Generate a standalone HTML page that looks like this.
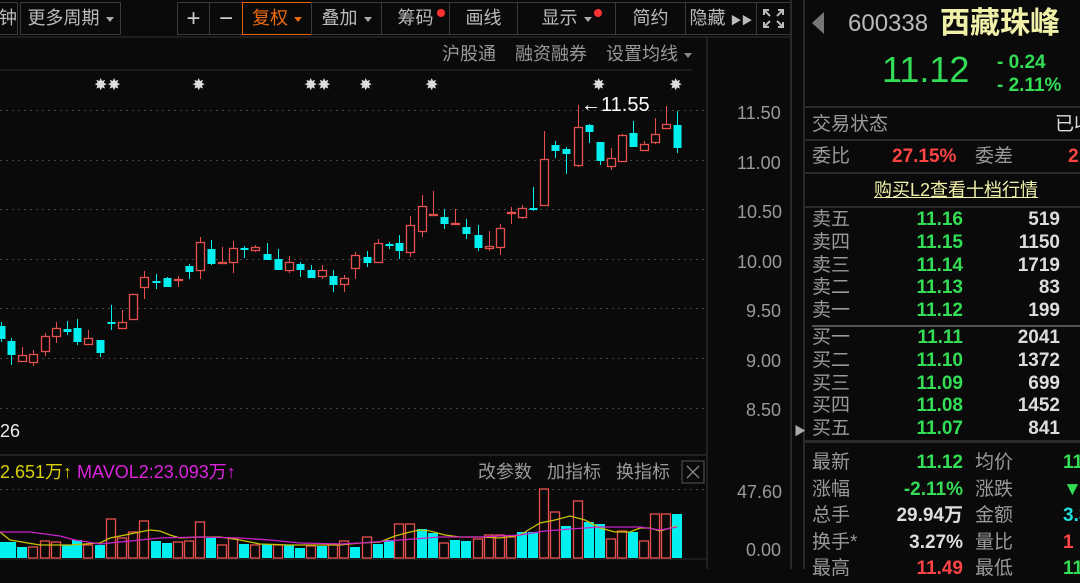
<!DOCTYPE html>
<html><head><meta charset="utf-8"><style>
*{margin:0;padding:0;box-sizing:border-box}
body{width:1080px;height:569px;background:#0a0a0a;overflow:hidden;position:relative;font-family:"Liberation Sans","Noto Sans CJK SC",sans-serif;color:#aaa;line-height:1.2}
.a{position:absolute;white-space:nowrap;line-height:22px}
.btn{position:absolute;top:2px;height:33px;border:1px solid #3a3a3a;color:#bbb;font-size:18px;line-height:31px;text-align:center}
.tri{display:inline-block;width:0;height:0;border-left:4px solid transparent;border-right:4px solid transparent;border-top:5px solid #aaa;vertical-align:middle;margin-left:6px}
.dot{position:absolute;width:8px;height:8px;border-radius:50%;background:#f33;top:6px}
.g{color:#33dd55;font-weight:bold}
.lb{color:#999;font-size:19px}
.hl{position:absolute;left:805px;width:275px;height:2px;background:#2a2a2a}
</style></head><body>
<div class="btn" style="left:-2px;width:20px;">钟</div>
<div class="btn" style="left:20px;width:101px;">更多周期<span class="tri"></span></div>
<div class="btn" style="left:177px;width:33px;font-size:24px;color:#ccc">+</div>
<div class="btn" style="left:209px;width:34px;font-size:24px;color:#ccc">−</div>
<div class="btn" style="left:242px;width:70px;border-color:#e8600a;color:#ee6a10">复权<span class="tri" style="border-top-color:#ee6a10"></span></div>
<div class="btn" style="left:311px;width:71px;">叠加<span class="tri"></span></div>
<div class="btn" style="left:381px;width:69px;">筹码<div class="dot" style="left:55px"></div></div>
<div class="btn" style="left:449px;width:69px;">画线</div>
<div class="btn" style="left:517px;width:99px;">显示<span class="tri"></span><div class="dot" style="left:76px"></div></div>
<div class="btn" style="left:615px;width:71px;">简约</div>
<div class="btn" style="left:685px;width:72px;">隐藏 <span style="font-size:11px">▶▶</span></div>
<div class="btn" style="left:756px;width:35px;">
<svg width="33" height="31" viewBox="0 0 33 31"><g stroke="#bbb" stroke-width="2" fill="none"><path d="M7 12V7h5M7 7l6 6M21 7h5v5M26 7l-6 6M7 19v5h5M7 24l6-6M26 19v5h-5M26 24l-6-6"/></g></svg></div>
<div class="a" style="left:0;top:36px;width:790px;height:2px;background:#1e1e1e"></div>
<div class="a" style="left:442px;top:43px;font-size:18px;color:#999;word-spacing:14px">沪股通 融资融券 设置均线<span class="tri" style="border-top-color:#888"></span></div>
<div class="a" style="left:0;top:69px;width:692px;height:2px;background:#1e1e1e"></div>
<div class="a" style="left:706px;top:36px;width:2px;height:533px;background:#222"></div>
<div class="a" style="left:790px;top:0;width:2px;height:569px;background:#2a2a2a"></div>
<div class="a" style="left:803px;top:0;width:2px;height:569px;background:#2a2a2a"></div>
<div class="a" style="left:794px;top:420px;width:8px;height:26px;color:#aaa;font-size:12px">▶</div>
<div class="a" style="left:0;top:454px;width:706px;height:2px;background:#222"></div>
<div class="a" style="left:0;top:558px;width:706px;height:2px;background:#1c1c1c"></div>
<svg class="a" style="left:0;top:0;line-height:normal" width="790" height="569">
<g stroke="#444" stroke-dasharray="2,4" stroke-width="1">
<line x1="0" y1="110.5" x2="706" y2="110.5"/><line x1="0" y1="160.5" x2="706" y2="160.5"/><line x1="0" y1="209.5" x2="706" y2="209.5"/><line x1="0" y1="259.5" x2="706" y2="259.5"/><line x1="0" y1="308.5" x2="706" y2="308.5"/><line x1="0" y1="358.5" x2="706" y2="358.5"/><line x1="0" y1="408.5" x2="706" y2="408.5"/><line x1="0" y1="489.5" x2="706" y2="489.5"/>
</g>
<g fill="#ddd" font-size="16" font-family="Liberation Sans">
<text x="94" y="90">✸✸</text><text x="192" y="90">✸</text><text x="304" y="90">✸✸</text><text x="359" y="90">✸</text><text x="425" y="90">✸</text><text x="592" y="90">✸</text><text x="669" y="90">✸</text>
</g>
<g id="cd"></g><g id="vol"></g>
<polyline fill="none" stroke="#c8c000" stroke-width="1.3" points="0,532 10,540 40,545 70,545 100,543 110,538 140,532 150,530 160,531 170,535 180,538 200,537 220,537 240,540 260,544 290,545 320,545 340,545 360,543 380,542 395,536 410,532 420,530 430,531 445,535 460,537 480,537 500,538 520,535 540,523 555,520 570,516 585,520 600,528 615,532 630,532 640,528 650,528 660,531 677,526"/>
<polyline fill="none" stroke="#cc22cc" stroke-width="1.3" points="0,532 30,532 60,536 75,540 100,544 130,541 160,538 200,537 240,538 270,540 300,543 340,544 360,543 400,540 440,537 480,537 520,535 545,531 570,529 600,527 640,527 660,530 677,527"/>
<text x="581" y="111" fill="#fff" font-size="20" font-family="Liberation Sans">←11.55</text>
<text x="0" y="437" fill="#eee" font-size="18" font-family="Liberation Sans">26</text>
<g fill="#999" font-size="18" font-family="Liberation Sans">
<text x="737" y="119">11.50</text><text x="737" y="169">11.00</text><text x="737" y="218">10.50</text><text x="737" y="268">10.00</text><text x="746" y="317">9.50</text><text x="746" y="367">9.00</text><text x="746" y="416">8.50</text><text x="737" y="498">47.60</text><text x="746" y="556">0.00</text>
</g>
<rect x="682" y="461" width="22" height="22" fill="none" stroke="#555"/>
<path d="M687 466l12 12M699 466l-12 12" stroke="#888" stroke-width="1.3"/>
</svg>
<div class="a" style="left:0;top:461px;font-size:18px;color:#d8d000">2.651万↑ <span style="color:#dd22dd">MAVOL2:23.093万↑</span></div>
<div class="a" style="left:478px;top:461px;font-size:18px;color:#999;word-spacing:10px">改参数 加指标 换指标</div>
<div class="a" style="left:812px;top:12px;width:0;height:0;border-top:11px solid transparent;border-bottom:11px solid transparent;border-right:12px solid #777"></div>
<div class="a" style="left:848px;top:10px;font-size:24px;color:#bbb;line-height:28px">600338</div>
<div class="a" style="left:940px;top:6px;font-size:30px;color:#f0f0a8;font-weight:bold;line-height:36px">西藏珠峰</div>
<div class="a" style="left:882px;top:50px;font-size:36px;color:#33dd55;line-height:40px">11.12</div>
<div class="a" style="left:997px;top:51px;font-size:19px;line-height:23px;color:#33dd55;font-weight:bold">- 0.24<br>- 2.11%</div>
<div class="hl" style="top:106px"></div>
<div class="a lb" style="left:812px;top:114px">交易状态</div><div class="a" style="left:1055px;top:114px;font-size:19px;color:#ddd">已收</div>
<div class="hl" style="top:139px"></div>
<div class="a lb" style="left:812px;top:146px">委比</div><div class="a" style="left:892px;top:146px;font-size:19px;color:#f44;font-weight:bold">27.15%</div><div class="a lb" style="left:975px;top:146px">委差</div><div class="a" style="left:1068px;top:146px;font-size:19px;color:#f44;font-weight:bold">2</div>
<div class="hl" style="top:172px"></div>
<div class="a" style="left:874px;top:179px;font-size:18px;color:#f0f0a8;text-decoration:underline">购买L2查看十档行情</div>
<div class="hl" style="top:206px"></div>
<div id="ob"></div>
<div class="a" style="left:812px;top:325px;width:268px;height:2px;background:#555"></div>
<div class="hl" style="top:440px;height:3px"></div>
<div class="a" style="left:812px;top:450px;font-size:19px;line-height:26.5px;color:#999">最新<br>涨幅<br>总手<br>换手*<br>最高</div>
<div class="a g" style="left:880px;top:450px;width:83px;text-align:right;font-size:19px;line-height:26.5px"><span>11.12</span><br>-2.11%<br><span style="color:#ddd">29.94万</span><br><span style="color:#ddd">3.27%</span><br><span style="color:#f44">11.49</span></div>
<div class="a" style="left:975px;top:450px;font-size:19px;line-height:26.5px;color:#999">均价<br>涨跌<br>金额<br>量比<br>最低</div>
<div class="a" style="left:1063px;top:450px;font-size:19px;line-height:26.5px;font-weight:bold;color:#33dd55">11<br>▼0<br><span style="color:#2dd">3.3</span><br><span style="color:#f44">1</span><br>11</div>
<script>
var ob=[["卖五","11.16","519"],["卖四","11.15","1150"],["卖三","11.14","1719"],["卖二","11.13","83"],["卖一","11.12","199"],["买一","11.11","2041"],["买二","11.10","1372"],["买三","11.09","699"],["买四","11.08","1452"],["买五","11.07","841"]];
var h="";ob.forEach(function(r,i){var y=209+i*22.8+(i>4?4:0);h+='<div class="a lb" style="left:812px;top:'+y+'px">'+r[0]+'</div><div class="a g" style="left:880px;top:'+y+'px;width:83px;text-align:right;font-size:19px">'+r[1]+'</div><div class="a" style="left:1000px;top:'+y+'px;width:60px;text-align:right;font-size:19px;color:#ddd;font-weight:bold">'+r[2]+'</div>';});
document.getElementById("ob").innerHTML=h;
var C=[[1,'c',326,338,322,342],[11,'c',341,354,338,365],[22,'r',355,361,347,361],[33,'r',354,362,350,366],[45,'r',336,351,333,356],[56,'r',328,336,322,343],[67,'c',329,331,321,335],[77,'c',328,341,319,345],[88,'r',338,344,330,345],[100,'c',340,352,340,357],[111,'c',322,323,305,330],[122,'r',322,328,310,328],[133,'r',294,319,294,319],[144,'r',277,287,271,299],[156,'c',281,282,274,289],[167,'c',278,286,277,287],[178,'r',279,280,276,287],[189,'c',266,271,264,279],[200,'r',242,270,237,279],[211,'c',249,263,240,265],[222,'r',262,263,247,263],[233,'r',248,262,241,273],[244,'c',248,249,246,258],[255,'r',247,250,245,252],[267,'c',254,259,243,259],[278,'c',259,269,249,269],[289,'r',262,270,256,273],[300,'c',264,269,262,277],[311,'c',270,277,265,277],[322,'r',270,276,265,279],[333,'c',276,284,270,292],[344,'r',278,284,275,292],[355,'r',255,268,252,279],[367,'c',257,262,251,267],[378,'r',243,262,239,262],[389,'c',244,245,242,249],[399,'c',243,250,235,259],[410,'r',225,252,216,257],[422,'r',206,231,195,237],[433,'r',214,215,191,215],[444,'c',217,223,209,229],[455,'r',223,224,209,224],[466,'c',227,233,219,239],[478,'c',235,247,225,251],[489,'r',246,248,231,251],[500,'r',228,247,224,255],[511,'r',212,213,207,224],[522,'r',208,217,205,219],[533,'c',208,209,187,211],[544,'r',159,205,131,205],[555,'c',145,150,141,158],[566,'c',149,153,147,174],[578,'r',127,165,105,167],[589,'c',125,131,124,143],[600,'c',142,160,142,165],[611,'r',158,166,148,170],[622,'r',135,161,134,162],[633,'c',133,146,121,147],[644,'r',144,150,141,150],[655,'r',134,142,118,144],[666,'r',124,128,106,128],[677,'c',125,147,111,153]];
var R="#e8504f",Cy="#00f0f0",s="";
C.forEach(function(c){var x=c[0],col=c[1]=='r'?R:Cy;s+='<line x1="'+(x+.5)+'" y1="'+c[4]+'" x2="'+(x+.5)+'" y2="'+c[5]+'" stroke="'+col+'"/>';
var hh=Math.max(c[3]-c[2],1);if(c[1]=='r')s+='<rect x="'+(x-3.5)+'" y="'+(c[2]+.5)+'" width="8" height="'+hh+'" fill="#0a0a0a" stroke="'+col+'" stroke-width="1.3"/>';else s+='<rect x="'+(x-3.5)+'" y="'+c[2]+'" width="8" height="'+(hh+1)+'" fill="'+col+'"/>';});
document.getElementById("cd").innerHTML=s;
var VT=[542,542,547,547,541,542,545,540,545,545,519,538,532,521,541,543,542,541,522,538,545,538,544,545,544,545,545,548,546,546,544,541,547,537,544,540,524,524,529,533,543,540,541,539,535,535,537,532,532,489,512,526,501,522,524,539,531,532,541,514,514,514];
var VC="cccrrrccrcrrrrccrrrcrrcrcrccrcrrcrccrrccrccrrrrccrrcrccrrcrrrc";
var v="";VT.forEach(function(t,i){var x=C[i][0],col=VC[i]=='r'?R:Cy;if(VC[i]=='r')v+='<rect x="'+(x-4.5)+'" y="'+t+'" width="9" height="'+(558-t)+'" fill="none" stroke="'+col+'" stroke-width="1.3"/>';else v+='<rect x="'+(x-5)+'" y="'+t+'" width="10" height="'+(558-t)+'" fill="'+col+'"/>';});
document.getElementById("vol").innerHTML=v;
</script>
</body></html>
